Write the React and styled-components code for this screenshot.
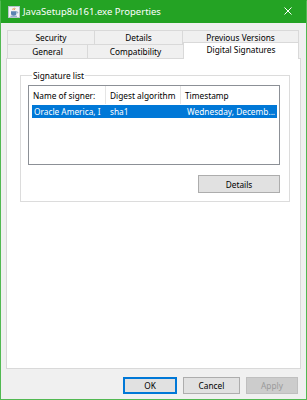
import React from 'react';
import styled, { createGlobalStyle } from 'styled-components';

const GlobalStyle = createGlobalStyle`
  html, body {
    margin: 0;
    padding: 0;
    background: #ffffff;
  }
  body {
    font-family: "Noto Sans", "Open Sans", sans-serif;
    font-size: 8.3px;
    color: #000;
  }
`;

const TOP_TABS = [
  { label: 'Security', width: 88 },
  { label: 'Details', width: 88 },
  { label: 'Previous Versions', width: 116 },
];

const FRONT_TABS = [
  { label: 'General', width: 81 },
  { label: 'Compatibility', width: 96 },
  { label: 'Digital Signatures', width: 116, active: true },
];

const COLUMNS = [
  { title: 'Name of signer:', width: 77 },
  { title: 'Digest algorithm', width: 75 },
  { title: 'Timestamp', width: 97 },
];

const SIGNERS = [
  { id: 1, name: 'Oracle America, I', digest: 'sha1', time: 'Wednesday, Decemb...' },
];

const JavaIcon = () => (
  <svg width="12" height="12" viewBox="0 0 12 12">
    <rect x="0.5" y="0.5" width="11" height="11" fill="#f4f4f4" stroke="#b9c3cc" />
    <path d="M5 2.2c.8.6-.6 1.1.2 1.9M6.6 1.8c.9.8-.7 1.4.2 2.3" stroke="#e0761d" strokeWidth="0.9" fill="none" />
    <path d="M3 5.2h5.4v2.6c0 1.2-1 1.9-2.7 1.9S3 9 3 7.8z" fill="#5b83b1" />
    <path d="M8.4 5.8h.8c.7 0 .7 1.4-.2 1.5" stroke="#5b83b1" strokeWidth="0.7" fill="none" />
    <rect x="2.4" y="9.8" width="6.6" height="0.8" fill="#5b83b1" />
  </svg>
);

const CloseIcon = () => (
  <svg width="8" height="8" viewBox="0 0 8 8">
    <path d="M0.5 0.5l7 7M7.5 0.5l-7 7" stroke="#ffffff" strokeWidth="1" />
  </svg>
);

const App = () => {
  return (
    <>
      <GlobalStyle />
      <Window>
        <TitleBar>
          <JavaIcon />
          <Title>JavaSetup8u161.exe Properties</Title>
          <CloseBox>
            <CloseIcon />
          </CloseBox>
        </TitleBar>
        <Body>
          <TabRows>
            <TabRow>
              {TOP_TABS.map((t) => (
                <Tab key={t.label} $width={t.width}>
                  {t.label}
                </Tab>
              ))}
            </TabRow>
            <TabRow>
              {FRONT_TABS.map((t) => (
                <Tab key={t.label} $width={t.width} $active={t.active}>
                  {t.label}
                </Tab>
              ))}
            </TabRow>
          </TabRows>
          <Panel>
            <GroupBox>
              <Legend>Signature list</Legend>
              <ListView>
                <HeaderRow>
                  {COLUMNS.map((c) => (
                    <HeaderCell key={c.title} $width={c.width}>
                      {c.title}
                    </HeaderCell>
                  ))}
                </HeaderRow>
                {SIGNERS.map((s) => (
                  <Row key={s.id} $selected>
                    <Cell $width={74}>{s.name}</Cell>
                    <Cell $width={75}>{s.digest}</Cell>
                    <Cell $width={90}>{s.time}</Cell>
                  </Row>
                ))}
              </ListView>
              <GroupFooter>
                <Button $width={82} $height={18}>Details</Button>
              </GroupFooter>
            </GroupBox>
          </Panel>
          <Footer>
            <Button $width={54} $default>OK</Button>
            <Button $width={57}>Cancel</Button>
            <Button $width={52} disabled>Apply</Button>
          </Footer>
        </Body>
      </Window>
    </>
  );
};

export default App;

const Window = styled.div`
  width: 307px;
  height: 400px;
  box-sizing: border-box;
  border: 1px solid #52b952;
  border-top-color: #24a324;
  background: #f0f0f0;
  display: flex;
  flex-direction: column;
`;

const TitleBar = styled.div`
  height: 22px;
  flex-shrink: 0;
  background: #24a324;
  display: flex;
  align-items: center;
  padding-left: 7px;
  color: #ffffff;
`;

const Title = styled.div`
  margin-left: 3px;
  font-size: 9.5px;
  flex: 1;
  padding-bottom: 1px;
`;

const CloseBox = styled.div`
  width: 22px;
  display: flex;
  justify-content: flex-start;
  align-items: center;
  padding-bottom: 2px;
`;

const Body = styled.div`
  flex: 1;
  display: flex;
  flex-direction: column;
  padding: 7px 5px 5px 5px;
`;

const TabRows = styled.div`
  display: flex;
  flex-direction: column;
  padding-left: 1px;
`;

const TabRow = styled.div`
  display: flex;
  height: 14px;
`;

const Tab = styled.div`
  width: ${(p) => p.$width}px;
  box-sizing: border-box;
  border: 1px solid #d9d9d9;
  border-bottom: none;
  border-left: ${(p) => (p.$active ? '1px solid #d9d9d9' : 'none')};
  background: ${(p) => (p.$active ? '#ffffff' : '#f0f0f0')};
  display: flex;
  align-items: center;
  justify-content: center;
  white-space: nowrap;
  &:first-child {
    border-left: 1px solid #d9d9d9;
  }
  ${(p) =>
    p.$active &&
    `
    height: 17px;
    margin-top: -2px;
    margin-left: -1px;
    position: relative;
    z-index: 1;
    padding-bottom: 4px;
  `}
`;

const Panel = styled.div`
  flex: 1;
  background: #ffffff;
  border: 1px solid #d9d9d9;
  padding: 11px 11px 0 13px;
`;

const GroupBox = styled.fieldset`
  margin: 0;
  border: 1px solid #dcdcdc;
  padding: 4px 9px 8px 7px;
  display: flex;
  flex-direction: column;
`;

const Legend = styled.legend`
  padding: 0 1px;
  margin-left: 4px;
  font-size: 8.3px;
`;

const ListView = styled.div`
  height: 80px;
  box-sizing: border-box;
  border: 1px solid #8c9096;
  background: #ffffff;
`;

const HeaderRow = styled.div`
  display: flex;
  height: 18px;
`;

const HeaderCell = styled.div`
  width: ${(p) => p.$width}px;
  box-sizing: border-box;
  border-right: 1px solid #e5e5e5;
  padding-left: 4px;
  display: flex;
  align-items: center;
  white-space: nowrap;
  overflow: hidden;
  &:last-child {
    border-right: none;
  }
`;

const Row = styled.div`
  display: flex;
  height: 13px;
  margin: 1px 2px 0 3px;
  align-items: center;
  background: ${(p) => (p.$selected ? '#0078d7' : 'transparent')};
  color: ${(p) => (p.$selected ? '#ffffff' : '#000000')};
`;

const Cell = styled.div`
  width: ${(p) => p.$width}px;
  padding-left: 2px;
  white-space: nowrap;
  overflow: hidden;
`;

const GroupFooter = styled.div`
  display: flex;
  justify-content: flex-end;
  margin-top: 10px;
`;

const Button = styled.button`
  width: ${(p) => p.$width}px;
  height: ${(p) => p.$height || 17}px;
  box-sizing: border-box;
  margin: 0;
  padding: 0;
  font-family: inherit;
  font-size: 8.3px;
  color: #000;
  background: #e1e1e1;
  border: 1px solid ${(p) => (p.$default ? '#0078d7' : '#adadad')};
  box-shadow: ${(p) => (p.$default ? 'inset 0 0 0 1px #0078d7' : 'none')};
  &:disabled {
    background: #cccccc;
    border-color: #bfbfbf;
    color: #9a9a9a;
  }
`;

const Footer = styled.div`
  display: flex;
  justify-content: flex-end;
  gap: 6px;
  padding-top: 8px;
  padding-right: 3px;
`;
